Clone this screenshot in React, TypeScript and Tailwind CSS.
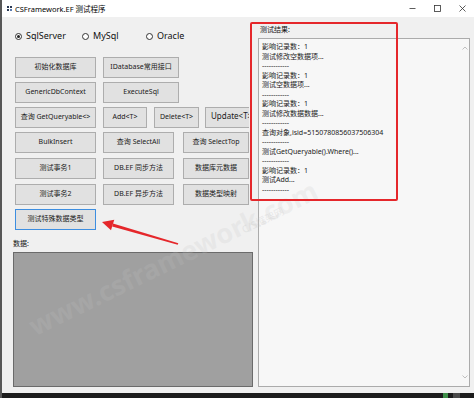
import type { ReactNode } from "react";
import clsx from "clsx";

const Btn = ({ className, children }: { className?: string; children: ReactNode }) => (
  <div
    className={clsx(
      "flex h-[21px] shrink-0 items-center justify-center whitespace-nowrap border border-[#adadad] bg-[#e1e1e1] text-[7px] text-[#1a1a1a]",
      className
    )}
  >
    {children}
  </div>
);

const Radio = ({ label, checked, className }: { label: string; checked?: boolean; className?: string }) => (
  <div className={clsx("flex items-center", className)}>
    <span className="flex h-[7px] w-[7px] items-center justify-center rounded-full border border-[#333] bg-white">
      {checked && <span className="h-[3px] w-[3px] rounded-full bg-[#222]" />}
    </span>
    <span className="ml-[4px] text-[9px] leading-[12px] text-[#111]">{label}</span>
  </div>
);

const logLines = [
  "影响记录数：1",
  "测试修改空数据项...",
  "------------",
  "影响记录数：1",
  "测试空数据项...",
  "------------",
  "影响记录数：1",
  "测试修改数据数据...",
  "------------",
  "查询对象,isid=5150780856037506304",
  "------------",
  "测试GetQueryable().Where()...",
  "------------",
  "影响记录数：1",
  "测试Add...",
  "------------",
];

export default function App() {
  return (
    <div className="relative flex h-[398px] w-[474px] overflow-hidden bg-[#f0f0f0] font-['Noto_Sans','Noto_Sans_CJK_SC',sans-serif]">
      {/* dark edge of the desktop behind */}
      <div className="w-[2px] shrink-0 bg-[#575757]" />

      <div className="flex flex-1 flex-col">
        {/* title bar */}
        <div className="flex h-[17px] shrink-0 items-center bg-white">
          <svg className="ml-[5px]" width="5" height="5" viewBox="0 0 5 5">
            <rect x="0" y="0" width="2" height="2" fill="#2b3a55" />
            <rect x="3" y="0" width="2" height="2" fill="#2b3a55" />
            <rect x="0" y="3" width="2" height="2" fill="#2b3a55" />
            <rect x="3" y="3" width="2" height="2" fill="#5b7bb0" />
          </svg>
          <span className="ml-[3px] text-[7.5px] leading-[10px] text-black">CSFramework.EF 测试程序</span>
          <div className="ml-auto mr-[-1px] flex">
            <div className="flex h-[17px] w-[25px] items-center justify-center">
              <svg width="7" height="7" viewBox="0 0 7 7">
                <path d="M0.5 3.5H6.5" stroke="#333" strokeWidth="0.8" />
              </svg>
            </div>
            <div className="flex h-[17px] w-[25px] items-center justify-center">
              <svg width="7" height="7" viewBox="0 0 7 7">
                <rect x="0.5" y="0.5" width="6" height="6" fill="none" stroke="#333" strokeWidth="0.8" />
              </svg>
            </div>
            <div className="flex h-[17px] w-[25px] items-center justify-center">
              <svg width="7" height="7" viewBox="0 0 7 7">
                <path d="M0.5 0.5L6.5 6.5M6.5 0.5L0.5 6.5" stroke="#333" strokeWidth="0.8" />
              </svg>
            </div>
          </div>
        </div>

        {/* body */}
        <div className="flex flex-1">
          {/* left side */}
          <div className="flex w-[253px] shrink-0 flex-col pl-[11px]">
            <div className="ml-[2px] mt-[12px] flex h-[14px] items-center">
              <Radio label="SqlServer" checked className="w-[67px]" />
              <Radio label="MySql" className="w-[64px]" />
              <Radio label="Oracle" />
            </div>

            <div className="ml-[2px] mt-[14px] flex flex-col gap-[4px]">
              <div className="flex">
                <Btn className="w-[81px]">初始化数据库</Btn>
                <Btn className="ml-[7px] w-[76px]">IDatabase常用接口</Btn>
              </div>
              <div className="flex">
                <Btn className="w-[81px]">GenericDbContext</Btn>
                <Btn className="ml-[7px] w-[76px]">ExecuteSql</Btn>
              </div>
              <div className="flex w-[234px] overflow-hidden">
                <Btn className="w-[81px]">查询 GetQueryable&lt;&gt;</Btn>
                <Btn className="ml-[7px] w-[44px]">Add&lt;T&gt;</Btn>
                <Btn className="ml-[7px] w-[45px]">Delete&lt;T&gt;</Btn>
                <Btn className="ml-[6px] w-[60px] !items-start !justify-start pl-[5px] pt-[2px] !text-[8px]">Update&lt;T&gt;</Btn>
              </div>
              <div className="flex">
                <Btn className="w-[81px]">BulkInsert</Btn>
                <Btn className="ml-[7px] w-[71px]">查询 SelectAll</Btn>
                <Btn className="ml-[9px] w-[66px]">查询 SelectTop</Btn>
              </div>
              <div className="mt-[1px] flex">
                <Btn className="w-[81px]">测试事务1</Btn>
                <Btn className="ml-[7px] w-[71px]">DB.EF 同步方法</Btn>
                <Btn className="ml-[9px] w-[66px]">数据库元数据</Btn>
              </div>
              <div className="mt-[1px] flex">
                <Btn className="w-[81px]">测试事务2</Btn>
                <Btn className="ml-[7px] w-[71px]">DB.EF 异步方法</Btn>
                <Btn className="ml-[9px] w-[66px]">数据类型映射</Btn>
              </div>
              <div className="flex">
                <Btn className="w-[81px] !border-[#3d8ee0]">测试特殊数据类型</Btn>
              </div>
            </div>

            <div className="mt-[9px] text-[7px] leading-[10px] text-[#111]">数据:</div>
            <div className="mt-[3px] h-[135px] w-[240px] border border-[#6b6b6b] bg-[#a0a0a0]" />
          </div>

          {/* right side */}
          <div className="flex flex-1 flex-col pl-[3px] pr-[4px] pt-[8px]">
            <div className="ml-[2px] text-[7px] leading-[10px] text-[#111]">测试结果:</div>
            <div className="mt-[3px] flex h-[349px] border border-[#ababab] bg-[#f7f7f7]">
              <div className="flex-1 pl-[3px] pt-[3px] text-[7px] leading-[9.5px] text-[#1a1a1a]">
                {logLines.map((line, i) => (
                  <div key={i} className="whitespace-nowrap">
                    {line}
                  </div>
                ))}
              </div>
              <div className="flex w-[9px] flex-col items-center justify-between py-[7px]">
                <svg width="6" height="4" viewBox="0 0 6 4">
                  <path d="M0.5 3.5L3 1L5.5 3.5" fill="none" stroke="#b8b8b8" strokeWidth="0.9" />
                </svg>
                <svg width="6" height="4" viewBox="0 0 6 4">
                  <path d="M0.5 0.5L3 3L5.5 0.5" fill="none" stroke="#b8b8b8" strokeWidth="0.9" />
                </svg>
              </div>
            </div>
          </div>
        </div>

        {/* taskbar strip */}
        <div className="flex h-[5px] shrink-0 bg-[#1c1c1c]">
          <div className="ml-[441px] w-[5px] bg-[#3f8f4a]" />
          <div className="ml-[5px] w-[7px] bg-[#4a4a4a]" />
        </div>
      </div>

      {/* watermark */}
      <div className="pointer-events-none absolute left-[8px] top-[240px] w-[330px] -rotate-[26deg] text-center text-[27px] font-bold leading-[36px] text-[#c4c4c4]/20">
        www.csframework.com
      </div>
      <div className="pointer-events-none absolute left-[240px] top-[214px] -rotate-[26deg] text-[10px] leading-[12px] text-[#c4c4c4]/30">
        C/S框架网
      </div>

      {/* red annotation box */}
      <div className="pointer-events-none absolute left-[250px] top-[22px] h-[179px] w-[148px] rounded-[2px] border-2 border-[#e5272b]" />

      {/* red annotation arrow */}
      <svg className="pointer-events-none absolute left-0 top-0" width="474" height="398" viewBox="0 0 474 398">
        <polygon points="178.3,243.2 177.7,244.8 112.2,226.6 113,223.6" fill="#e5272b" />
        <polygon points="102,222 114.3,219.8 111,230.3" fill="#e5272b" />
      </svg>
    </div>
  );
}
